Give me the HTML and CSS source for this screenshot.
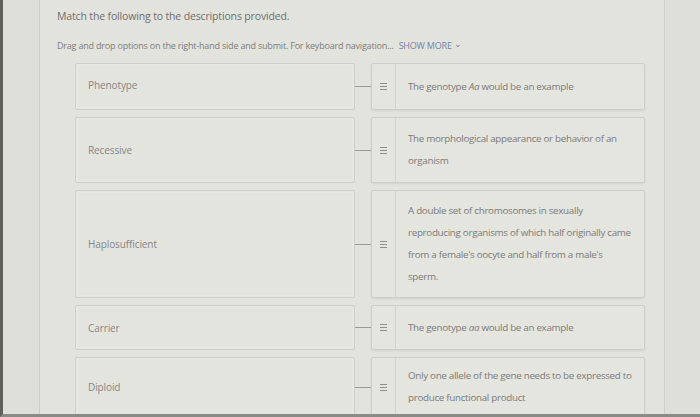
FILE: index.html
```html
<!DOCTYPE html>
<html lang="en">
<head>
    <meta charset="UTF-8">
    <title>Match the following</title>
    <link rel="stylesheet" href="styles.css">
</head>
<body>
    <div class="screen">
        <div class="page">
            <p class="question">Match the following to the descriptions provided.</p>
            <p class="hint">Drag and drop options on the right-hand side and submit. For keyboard navigation... <span class="more">SHOW MORE <span class="chev">&#8964;</span></span></p>

            <div class="rows">
                <div class="row r1">
                    <div class="term">Phenotype</div>
                    <div class="link"></div>
                    <div class="answer">
                        <div class="handle"><span></span></div>
                        <div class="text"><span>The genotype <i>Aa</i> would be an example</span></div>
                    </div>
                </div>
                <div class="row r2">
                    <div class="term">Recessive</div>
                    <div class="link"></div>
                    <div class="answer">
                        <div class="handle"><span></span></div>
                        <div class="text"><span>The morphological appearance or behavior of an organism</span></div>
                    </div>
                </div>
                <div class="row r3">
                    <div class="term">Haplosufficient</div>
                    <div class="link"></div>
                    <div class="answer">
                        <div class="handle"><span></span></div>
                        <div class="text"><span>A double set of chromosomes in sexually reproducing organisms of which half originally came from a female's oocyte and half from a male's sperm.</span></div>
                    </div>
                </div>
                <div class="row r4">
                    <div class="term">Carrier</div>
                    <div class="link"></div>
                    <div class="answer">
                        <div class="handle"><span></span></div>
                        <div class="text"><span>The genotype <i>aa</i> would be an example</span></div>
                    </div>
                </div>
                <div class="row r5">
                    <div class="term">Diploid</div>
                    <div class="link"></div>
                    <div class="answer">
                        <div class="handle"><span></span></div>
                        <div class="text"><span>Only one allele of the gene needs to be expressed to produce functional product</span></div>
                    </div>
                </div>
            </div>
        </div>
    </div>
</body>
</html>
```

FILE: styles.css
```css
body {
    margin: 0;
    background-color: #dcdcd7;
    font-family: "Open Sans", sans-serif;
    overflow: hidden;
}

.screen {
    height: 414px;
    border-left: 3px solid #5f5f5c;
    border-bottom: 3px solid #8a8a86;
    background-color: #dfdfda;
    overflow: hidden;
}

.page {
    margin-left: 36px;
    width: 626px;
    height: 100%;
    border-left: 1px solid #cdcdc8;
    border-right: 1px solid #cfcfca;
    background-color: #e3e3de;
    padding-left: 17px;
    box-sizing: border-box;
}

.question {
    margin: 0;
    padding-top: 9px;
    font-size: 10.5px;
    color: #6e6e6c;
    letter-spacing: -0.15px;
}

.hint {
    margin: 0;
    padding-top: 16px;
    font-size: 9px;
    color: #7c7c7a;
    letter-spacing: -0.2px;
}

.more {
    color: #6f84a6;
    margin-left: 3px;
}

.chev {
    font-size: 9px;
    position: relative;
    top: -2px;
}

.rows {
    margin-top: 11px;
    margin-left: 18px;
    display: flex;
    flex-direction: column;
    gap: 7px;
}

.row {
    display: flex;
    align-items: stretch;
}

.r1 { height: 47px; }
.r2 { height: 66px; }
.r3 { height: 108px; }
.r4 { height: 45px; }
.r5 { height: 60px; }

.term {
    width: 280px;
    border: 1px solid #cfcfca;
    border-radius: 2px;
    background-color: #e4e4df;
    display: flex;
    align-items: center;
    padding-left: 12px;
    box-sizing: border-box;
    font-size: 10px;
    color: #858583;
    letter-spacing: -0.1px;
    box-shadow: inset 0 0 0 2px #e7e7e2;
}

.r1 .term { align-items: flex-start; padding-top: 14px; }

.link {
    width: 16px;
    display: flex;
    align-items: center;
}

.link::before {
    content: "";
    width: 100%;
    height: 1px;
    background-color: #9a9a96;
}

.answer {
    width: 272px;
    display: flex;
    border: 1px solid #cfcfca;
    border-radius: 2px;
    background-color: #e5e5e0;
    box-shadow: 0 1px 2px rgba(0, 0, 0, 0.08);
}

.handle {
    width: 23px;
    border-right: 1px solid #d2d2cd;
    display: flex;
    align-items: center;
    justify-content: center;
}

.handle span {
    width: 7px;
    height: 5px;
    border-top: 1px solid #8e8e8a;
    border-bottom: 1px solid #8e8e8a;
    position: relative;
}

.handle span::after {
    content: "";
    position: absolute;
    left: 0;
    right: 0;
    top: 2px;
    height: 1px;
    background-color: #8e8e8a;
}

.text {
    flex: 1;
    display: flex;
    align-items: center;
    padding: 0 10px 0 12px;
    font-size: 9.8px;
    line-height: 22px;
    color: #7a7a78;
    letter-spacing: -0.3px;
}
```
